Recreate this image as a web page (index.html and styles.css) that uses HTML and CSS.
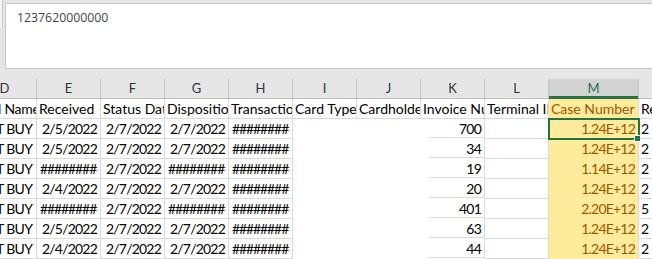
FILE: index.html
```html
<!DOCTYPE html>
<html>
<head>
<meta charset="utf-8">
<link rel="stylesheet" href="styles.css">
</head>
<body>
<div class="top">
  <div class="namebox"></div>
  <div class="fbox"><span class="ftext">1237620000000</span></div>
</div>
<div class="sheet">
  <div class="row hdr">
    <div class="c">D</div><div class="c">E</div><div class="c">F</div><div class="c">G</div><div class="c">H</div><div class="c">I</div><div class="c">J</div><div class="c">K</div><div class="c">L</div><div class="c m">M</div><div class="c">N</div>
  </div>
  <div class="row titles">
    <div class="c l d">Legal Name</div><div class="c l">Received</div><div class="c l">Status Date</div><div class="c l">Disposition</div><div class="c l">Transaction</div><div class="c l">Card Type</div><div class="c l">Cardholder</div><div class="c l">Invoice Number</div><div class="c l">Terminal ID</div><div class="c l m">Case Number</div><div class="c l">Re</div>
  </div>
  <div class="row data">
    <div class="c l d">BEST BUY INC</div><div class="c r">2/5/2022</div><div class="c r">2/7/2022</div><div class="c r">2/7/2022</div><div class="c h">########</div><div class="c blank"></div><div class="c blank"></div><div class="c r k">700</div><div class="c"></div><div class="c r m sel">1.24E+12</div><div class="c l n">2</div>
  </div>
  <div class="row data">
    <div class="c l d">BEST BUY</div><div class="c r">2/5/2022</div><div class="c r">2/7/2022</div><div class="c r">2/7/2022</div><div class="c h">########</div><div class="c blank"></div><div class="c blank"></div><div class="c r k">34</div><div class="c"></div><div class="c r m">1.24E+12</div><div class="c l n">2</div>
  </div>
  <div class="row data">
    <div class="c l d">BEST BUY</div><div class="c h">########</div><div class="c r">2/7/2022</div><div class="c h">########</div><div class="c h">########</div><div class="c blank"></div><div class="c blank"></div><div class="c r k">19</div><div class="c"></div><div class="c r m">1.14E+12</div><div class="c l n">2</div>
  </div>
  <div class="row data">
    <div class="c l d">BEST BUY</div><div class="c r">2/4/2022</div><div class="c r">2/7/2022</div><div class="c r">2/7/2022</div><div class="c h">########</div><div class="c blank"></div><div class="c blank"></div><div class="c r k">20</div><div class="c"></div><div class="c r m">1.24E+12</div><div class="c l n">2</div>
  </div>
  <div class="row data">
    <div class="c l d">BEST BUY</div><div class="c h">########</div><div class="c r">2/7/2022</div><div class="c h">########</div><div class="c h">########</div><div class="c blank"></div><div class="c blank"></div><div class="c r k">401</div><div class="c"></div><div class="c r m">2.20E+12</div><div class="c l n">5</div>
  </div>
  <div class="row data">
    <div class="c l d">BEST BUY</div><div class="c r">2/5/2022</div><div class="c r">2/7/2022</div><div class="c r">2/7/2022</div><div class="c h">########</div><div class="c blank"></div><div class="c blank"></div><div class="c r k">63</div><div class="c"></div><div class="c r m">1.24E+12</div><div class="c l n">2</div>
  </div>
  <div class="row data">
    <div class="c l d">BEST BUY</div><div class="c r">2/4/2022</div><div class="c r">2/7/2022</div><div class="c r">2/7/2022</div><div class="c h">########</div><div class="c blank"></div><div class="c blank"></div><div class="c r k">44</div><div class="c"></div><div class="c r m">1.24E+12</div><div class="c l n">2</div>
  </div>
</div>
</body>
</html>
```
FILE: styles.css
```css
html, body {
  margin: 0;
  padding: 0;
}
body {
  width: 652px;
  height: 259px;
  overflow: hidden;
  background: #ffffff;
  font-family: "Lato", "Liberation Sans", sans-serif;
}
.top {
  height: 79px;
  background: #e6e6e6;
  display: flex;
  align-items: flex-start;
}
.namebox {
  width: 2px;
  height: 28px;
  background: #f4f4f4;
  border-right: 1px solid #c6c6c6;
  flex: none;
}
.fbox {
  flex: none;
  width: 700px;
  height: 64px;
  margin-top: 3px;
  margin-left: 2px;
  background: #ffffff;
  border: 1px solid #c6c6c6;
  box-sizing: content-box;
}
.ftext {
  display: block;
  padding: 6px 0 0 11px;
  font-family: "Open Sans", "Noto Sans", sans-serif;
  font-size: 12.3px;
  line-height: 16px;
  color: #444444;
}
.sheet {
  margin-left: -27px;
  width: max-content;
}
.row {
  display: grid;
  grid-template-columns: repeat(9, 64px) 90px 64px;
  height: 20px;
}
.c {
  box-sizing: border-box;
  height: 20px;
  border-right: 1px solid #d9d9d9;
  border-bottom: 1px solid #d9d9d9;
  overflow: hidden;
  white-space: nowrap;
  font-size: 14px;
  line-height: 19px;
  color: #000000;
  position: relative;
}
.hdr .c {
  background: #e6e6e6;
  border-right-color: #c4c4c4;
  border-bottom-color: #bdbdbd;
  text-align: center;
  font-size: 13px;
  line-height: 19px;
  color: #333333;
}
.hdr .c.m {
  background: #d2d2d2;
  color: #217346;
  box-shadow: inset 0 -2px 0 #217346;
  border-bottom-color: #217346;
}
.l {
  text-align: left;
  padding-left: 2px;
}
.r {
  text-align: right;
  padding-right: 3px;
  letter-spacing: -0.8px;
}
.d {
  padding-left: 0;
  letter-spacing: -0.6px;
}
.titles .d {
  text-indent: -2px;
  letter-spacing: -0.3px;
}
.n {
  letter-spacing: -0.8px;
}
.h {
  padding-left: 3px;
  letter-spacing: -1.1px;
  font-size: 14px;
}
.blank {
  border-right-color: transparent;
  border-bottom-color: transparent;
}
.data .k {
  border-bottom-color: transparent;
  background: linear-gradient(#d9d9d9, #d9d9d9) no-repeat 8px 100% / calc(100% - 8px) 1px;
}
.c.m {
  background: #ffeb9c;
  color: #9c5700;
}
.data .c.m,
.titles .c.m {
  border-bottom-color: #ffeb9c;
}
.sel::after {
  content: "";
  position: absolute;
  left: -1px;
  top: -1px;
  right: -2px;
  bottom: -2px;
  border: 2px solid #217346;
}
.sel::before {
  content: "";
  position: absolute;
  right: -3px;
  bottom: -4px;
  width: 5px;
  height: 5px;
  background: #217346;
  border: 1px solid #ffffff;
  z-index: 2;
}
.row .sel {
  overflow: visible;
  z-index: 1;
}
```
